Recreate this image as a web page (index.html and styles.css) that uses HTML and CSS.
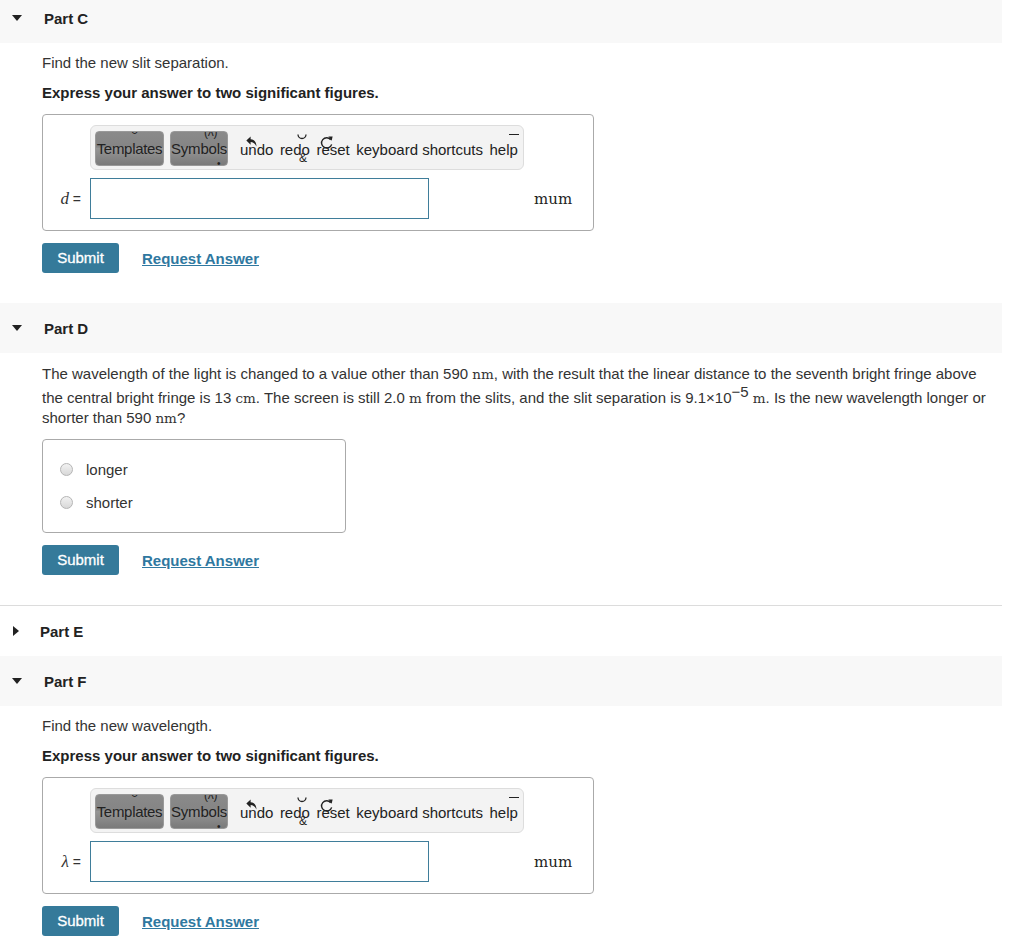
FILE: index.html
```html
<!DOCTYPE html>
<html>
<head>
<meta charset="utf-8">
<link rel="stylesheet" href="styles.css">
</head>
<body>
<div class="page">

  <section class="part">
    <div class="part-head"><span class="tri-down"></span><span class="part-title">Part C</span></div>
    <div class="part-body">
      <p class="txt">Find the new slit separation.</p>
      <p class="txt strong">Express your answer to two significant figures.</p>
      <div class="answer-box">
        <div class="toolbar">
          <span class="tb-btn tb-templates">Templates<i class="g g-t1">0</i></span>
          <span class="tb-btn tb-symbols">Symbols<i class="g g-s1">°°°</i><i class="g g-s2">(λ)</i><i class="g g-s3">→</i><i class="g g-s4">•</i></span>
          <span class="tb-link tb-undo">undo<svg class="ic ic-undo" viewBox="0 0 10 10"><path d="M9.5 9.5 C9.5 5 7 3 4.2 3 L4.2 0.5 L0.3 4.2 L4.2 8 L4.2 5.5 C6.5 5.5 8.2 6.8 9.5 9.5 Z" fill="#222"/></svg></span>
          <span class="tb-link tb-redo">redo<svg class="ic ic-arc" viewBox="0 0 10 6"><path d="M1 0.5 A4 4 0 0 0 9 0.5" fill="none" stroke="#222" stroke-width="1.3"/></svg><i class="g g-amp">&amp;</i></span>
          <span class="tb-link tb-reset">reset<svg class="ic ic-reset" viewBox="0 0 16 16"><path d="M12.5 5 A5.5 5.5 0 1 0 13.5 10" fill="none" stroke="#222" stroke-width="1.5"/><path d="M10 1.5 L14.5 1.5 L13.5 6 Z" fill="#222"/></svg></span>
          <span class="tb-link">keyboard shortcuts</span>
          <span class="tb-link tb-help">help<i class="g g-bar"></i></span>
        </div>
        <div class="input-row">
          <span class="lbl"><span class="mvar">d</span> =</span>
          <span class="ans-input"></span>
          <span class="unit">mum</span>
        </div>
      </div>
      <div class="actions"><span class="btn-submit">Submit</span><a class="req" href="#">Request Answer</a></div>
    </div>
  </section>

  <section class="part">
    <div class="part-head"><span class="tri-down"></span><span class="part-title">Part D</span></div>
    <div class="part-body">
      <p class="txt para">The wavelength of the light is changed to a value other than 590 <span class="mu">nm</span>, with the result that the linear distance to the seventh bright fringe above the central bright fringe is 13 <span class="mu">cm</span>. The screen is still 2.0 <span class="mu">m</span> from the slits, and the slit separation is 9.1×10<sup class="sup">−5</sup> <span class="mu">m</span>. Is the new wavelength longer or shorter than 590 <span class="mu">nm</span>?</p>
      <div class="radio-box">
        <label class="opt"><span class="radio"></span>longer</label>
        <label class="opt"><span class="radio"></span>shorter</label>
      </div>
      <div class="actions"><span class="btn-submit">Submit</span><a class="req" href="#">Request Answer</a></div>
    </div>
  </section>

  <section class="part part-closed">
    <div class="part-head closed"><span class="tri-right"></span><span class="part-title">Part E</span></div>
  </section>

  <section class="part">
    <div class="part-head"><span class="tri-down"></span><span class="part-title">Part F</span></div>
    <div class="part-body">
      <p class="txt">Find the new wavelength.</p>
      <p class="txt strong">Express your answer to two significant figures.</p>
      <div class="answer-box">
        <div class="toolbar">
          <span class="tb-btn tb-templates">Templates<i class="g g-t1">0</i></span>
          <span class="tb-btn tb-symbols">Symbols<i class="g g-s1">°°°</i><i class="g g-s2">(λ)</i><i class="g g-s3">→</i><i class="g g-s4">•</i></span>
          <span class="tb-link tb-undo">undo<svg class="ic ic-undo" viewBox="0 0 10 10"><path d="M9.5 9.5 C9.5 5 7 3 4.2 3 L4.2 0.5 L0.3 4.2 L4.2 8 L4.2 5.5 C6.5 5.5 8.2 6.8 9.5 9.5 Z" fill="#222"/></svg></span>
          <span class="tb-link tb-redo">redo<svg class="ic ic-arc" viewBox="0 0 10 6"><path d="M1 0.5 A4 4 0 0 0 9 0.5" fill="none" stroke="#222" stroke-width="1.3"/></svg><i class="g g-amp">&amp;</i></span>
          <span class="tb-link tb-reset">reset<svg class="ic ic-reset" viewBox="0 0 16 16"><path d="M12.5 5 A5.5 5.5 0 1 0 13.5 10" fill="none" stroke="#222" stroke-width="1.5"/><path d="M10 1.5 L14.5 1.5 L13.5 6 Z" fill="#222"/></svg></span>
          <span class="tb-link">keyboard shortcuts</span>
          <span class="tb-link tb-help">help<i class="g g-bar"></i></span>
        </div>
        <div class="input-row">
          <span class="lbl"><span class="mvar-up">λ</span> =</span>
          <span class="ans-input"></span>
          <span class="unit">mum</span>
        </div>
      </div>
      <div class="actions"><span class="btn-submit">Submit</span><a class="req" href="#">Request Answer</a></div>
    </div>
  </section>

</div>
</body>
</html>
```
FILE: styles.css
```css
html, body {
  margin: 0;
  padding: 0;
  background: #fff;
}
body {
  font-family: "Liberation Sans", Arial, sans-serif;
  font-size: 15px;
  color: #333;
}
.page {
  width: 1002px;
  margin-top: -7px;
}
.part-head {
  height: 50px;
  background: #f8f8f8;
  display: flex;
  align-items: center;
}
.part-head.closed {
  background: #fff;
  border-top: 1px solid #dcdcdc;
}
.part-title {
  font-weight: bold;
  color: #222;
  font-size: 15px;
}
.tri-down {
  width: 0;
  height: 0;
  border-left: 5px solid transparent;
  border-right: 5px solid transparent;
  border-top: 6px solid #222;
  margin-left: 12px;
  margin-right: 22px;
}
.tri-right {
  width: 0;
  height: 0;
  border-top: 5px solid transparent;
  border-bottom: 5px solid transparent;
  border-left: 6px solid #222;
  margin-left: 13px;
  margin-right: 21px;
}
.part-body {
  padding: 10px 0 30px 42px;
}
.txt {
  margin: 0 0 10px 0;
  line-height: 20px;
}
.strong {
  font-weight: bold;
  color: #222;
  margin-bottom: 11px;
}
.para {
  line-height: 19px;
  margin-top: 1px;
  margin-bottom: 11px;
  padding-right: 10px;
}
.mu {
  font-family: "DejaVu Serif", "Liberation Serif", serif;
  font-size: 13.5px;
}
.sup {
  font-size: 15px;
  vertical-align: 6px;
  line-height: 1;
}
.answer-box {
  width: 531px;
  border: 1px solid #aaa;
  border-radius: 4px;
  padding: 10px 19px 11px 0;
  margin-bottom: 12px;
}
.toolbar {
  margin-left: 47px;
  width: 424px;
  height: 35px;
  padding: 5px 4px 3px 4px;
  background: #f3f3f3;
  border: 1px solid #ddd;
  border-radius: 6px;
  display: flex;
  align-items: center;
  color: #222;
  white-space: nowrap;
}
.tb-btn {
  position: relative;
  overflow: hidden;
  flex: none;
  height: 33px;
  line-height: 33px;
  border: 1px solid #999;
  border-radius: 4px;
  background: linear-gradient(#8a8a8a 0%, #858585 45%, #959595 50%, #7a7a7a 100%);
  color: #222;
  text-align: center;
  font-size: 15px;
}
.tb-templates {
  width: 67px;
  margin-right: 6px;
  letter-spacing: -0.3px;
}
.tb-symbols {
  width: 56px;
  margin-right: 12px;
  letter-spacing: -0.2px;
}
.tb-link {
  position: relative;
  flex: none;
  margin-right: 6.5px;
  font-size: 15px;
  line-height: 20px;
  margin-top: 2px;
}
.g {
  position: absolute;
  font-style: normal;
  color: #222;
  line-height: 1;
}
.g-t1 { top: -9px; left: 35px; font-size: 13px; }
.g-s1 { top: -8px; left: 7px; font-size: 12px; color: #eee; letter-spacing: -1px; }
.g-s2 { top: -6px; left: 33px; font-size: 12px; }
.g-s3 { top: 28px; left: 16px; font-size: 12px; }
.g-s4 { top: 27px; left: 46px; font-size: 10px; }
.ic {
  position: absolute;
}
.ic-undo { width: 11px; height: 11px; left: 6px; top: -4px; }
.ic-arc { width: 10px; height: 6px; left: 17px; top: -6px; }
.g-amp { top: 12px; left: 19px; font-size: 12px; }
.ic-reset { width: 15px; height: 15px; left: 3px; top: -5px; }
.g-bar {
  width: 10px;
  height: 1px;
  background: #222;
  top: -6px;
  left: 19px;
}
.input-row {
  display: flex;
  align-items: center;
  margin-top: 8px;
}
.lbl {
  width: 38px;
  padding-right: 9px;
  text-align: right;
  font-size: 14px;
  color: #333;
}
.mvar {
  font-family: "Liberation Serif", "DejaVu Serif", serif;
  font-style: italic;
  font-size: 17px;
}
.mvar-up {
  font-family: "Liberation Serif", "DejaVu Serif", serif;
  font-style: italic;
  font-size: 17px;
}
.ans-input {
  width: 337px;
  height: 39px;
  border: 1px solid #3f7d9a;
  background: #fff;
}
.unit {
  margin-left: 105px;
  font-family: "DejaVu Serif", "Liberation Serif", serif;
  font-size: 15px;
  color: #222;
}
.radio-box {
  width: 302px;
  border: 1px solid #aaa;
  border-radius: 4px;
  padding: 19px 0 20px 0;
  margin-bottom: 12px;
  display: flex;
  flex-direction: column;
  gap: 13px;
}
.opt {
  display: flex;
  align-items: center;
  height: 20px;
  color: #333;
}
.radio {
  width: 11px;
  height: 11px;
  border-radius: 50%;
  border: 1px solid #b5b5b5;
  background: linear-gradient(#f2f2f2, #d8d8d8);
  margin-left: 17px;
  margin-right: 13px;
}
.actions {
  display: flex;
  align-items: center;
}
.btn-submit {
  display: inline-block;
  width: 77px;
  height: 30px;
  line-height: 30px;
  text-align: center;
  background: #357a9a;
  color: #fff;
  border-radius: 3px;
  font-size: 15px;
  -webkit-text-stroke: 0.3px #fff;
}
.req {
  margin-left: 23px;
  color: #2f78a0;
  font-weight: bold;
  text-decoration: underline;
  font-size: 15px;
}
```
